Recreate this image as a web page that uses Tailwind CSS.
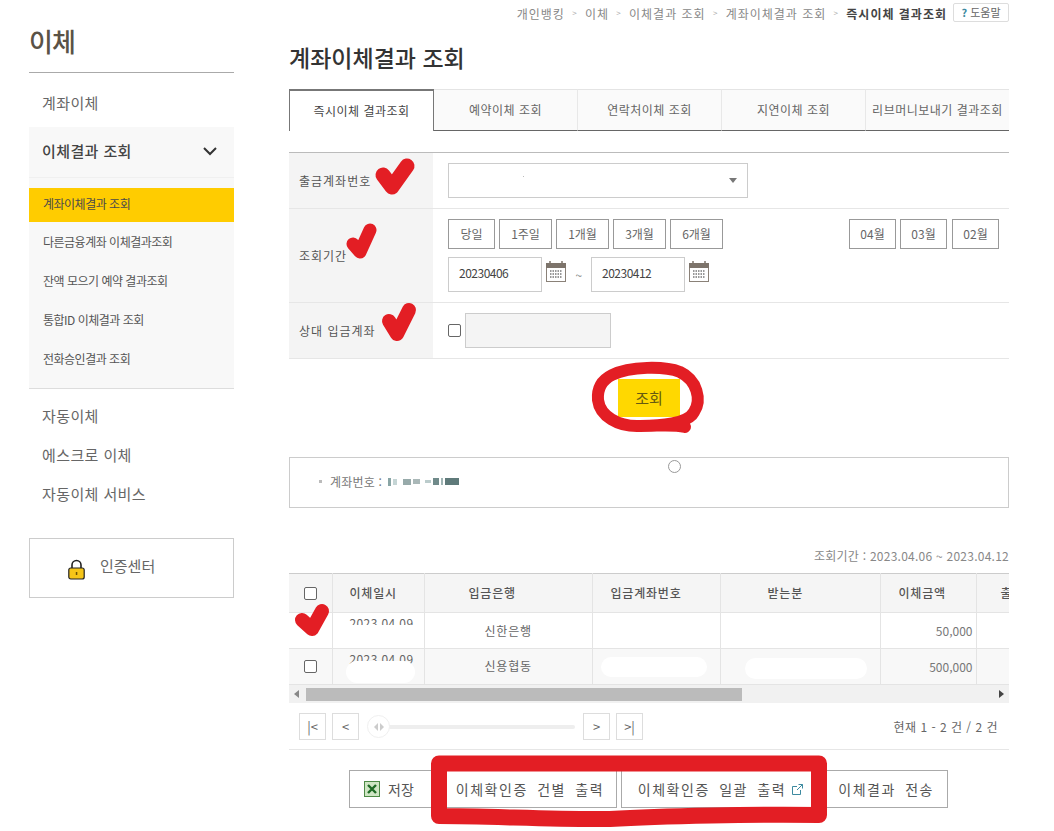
<!DOCTYPE html>
<html lang="ko">
<head>
  <meta charset="UTF-8" />
  <title>계좌이체결과 조회</title>
  <script src="https://cdn.jsdelivr.net/npm/@tailwindcss/browser@4"></script>
</head>
<body class="bg-white">
<div class="relative w-[1054px] h-[831px] overflow-hidden flex font-['Noto_Sans_CJK_KR','Noto_Sans',sans-serif] text-[12px] text-[#555]">

  <!-- Sidebar -->
  <aside class="ml-[29px] w-[205px] shrink-0">
    <div class="h-[73px] border-b border-[#aaa] pt-[22px] text-[26px] leading-[38px] font-medium text-[#5a5246] tracking-[-1px]">이체</div>
    <a class="flex items-center h-[54px] pl-[13px] pt-[6px] text-[15px] tracking-[0.4px] text-[#666]">계좌이체</a>
    <div class="bg-[#f8f8f8] h-[262px] border-b border-[#ddd]">
      <div class="h-[51px] flex items-center justify-between pl-[13px] pr-[17px] pb-[2px] border-b border-[#f0f0f0] text-[15px] font-medium tracking-[0.4px] text-[#444]">
        이체결과 조회
        <svg width="14" height="9" viewBox="0 0 14 9" fill="none" stroke="#333" stroke-width="2"><path d="M1 1l6 6 6-6"/></svg>
      </div>
      <a class="mt-[10px] flex items-center h-[34px] pl-[14px] pb-[2px] bg-[#ffcc00] tracking-[-0.5px] text-[#4a4a4a]">계좌이체결과 조회</a>
      <a class="flex items-center h-[39px] pl-[14px] tracking-[-0.5px] text-[#555]">다른금융계좌 이체결과조회</a>
      <a class="flex items-center h-[39px] pl-[14px] tracking-[-0.5px] text-[#555]">잔액 모으기 예약 결과조회</a>
      <a class="flex items-center h-[39px] pl-[14px] tracking-[-0.5px] text-[#555]">통합ID 이체결과 조회</a>
      <a class="flex items-center h-[39px] pl-[14px] tracking-[-0.5px] text-[#555]">전화승인결과 조회</a>
    </div>
    <div class="pt-[8px] text-[15px] text-[#666] tracking-[0.4px]">
      <a class="flex items-center h-[39px] pl-[13px]">자동이체</a>
      <a class="flex items-center h-[39px] pl-[13px]">에스크로 이체</a>
      <a class="flex items-center h-[39px] pl-[13px]">자동이체 서비스</a>
    </div>
    <div class="mt-[24px] h-[60px] border border-[#ccc] flex items-center pl-[38px] gap-[15px] text-[15px] text-[#666]">
      <svg class="mt-[3px]" width="17" height="21" viewBox="0 0 17 21"><path d="M4 10V6a4.500 4.500 0 0 1 9 0v4" fill="none" stroke="#222" stroke-width="1.600"/><rect x="0.800" y="9" width="15.400" height="11" rx="2" fill="#f5c518" stroke="#222" stroke-width="1.200"/><rect x="7.800" y="13" width="1.500" height="3" fill="#6b5200"/></svg>
      <span class="pb-[3px]">인증센터</span>
    </div>
  </aside>

  <!-- Main -->
  <main class="ml-[55px] w-[720px] shrink-0">
    <div class="h-[26px] flex justify-end items-start pt-[3px] tracking-[1px] text-[#888] text-[12px]">
      <span class="leading-[22px]">개인뱅킹</span><span class="w-[20px] text-center text-[8px] leading-[20px] text-[#aaa]">&gt;</span>
      <span class="leading-[22px]">이체</span><span class="w-[20px] text-center text-[8px] leading-[20px] text-[#aaa]">&gt;</span>
      <span class="leading-[22px]">이체결과 조회</span><span class="w-[20px] text-center text-[8px] leading-[20px] text-[#aaa]">&gt;</span>
      <span class="leading-[22px]">계좌이체결과 조회</span><span class="w-[20px] text-center text-[8px] leading-[20px] text-[#aaa]">&gt;</span>
      <span class="leading-[22px] font-bold text-[#444]">즉시이체 결과조회</span>
      <span class="ml-[6px] w-[56px] h-[19px] border border-[#ddd] rounded-[2px] flex items-center justify-center gap-[3px] text-[11px] tracking-normal text-[#666]"><b class="text-[#3d8aa0]">?</b>도움말</span>
    </div>
    <h1 class="h-[63px] flex items-center text-[23px] font-medium text-[#333]">계좌이체결과 조회</h1>

    <!-- Tabs -->
    <div class="grid grid-cols-[145px_144px_144px_144px_143px] h-[42px] tracking-[0.5px] text-[#666]">
      <div class="flex items-center justify-center border-t-2 border-x border-x-[#777] border-t-[#777] bg-white text-[#444]">즉시이체 결과조회</div>
      <div class="flex items-center justify-center border-t border-r border-t-[#e4e4e4] border-r-[#e8e8e8] border-b border-b-[#666] bg-[#fafafa]">예약이체 조회</div>
      <div class="flex items-center justify-center border-t border-r border-t-[#e4e4e4] border-r-[#e8e8e8] border-b border-b-[#666] bg-[#fafafa]">연락처이체 조회</div>
      <div class="flex items-center justify-center border-t border-r border-t-[#e4e4e4] border-r-[#e8e8e8] border-b border-b-[#666] bg-[#fafafa]">지연이체 조회</div>
      <div class="flex items-center justify-center border-t border-t-[#e4e4e4] border-b border-b-[#666] bg-[#fafafa] whitespace-nowrap">리브머니보내기 결과조회</div>
    </div>

    <!-- Search form -->
    <div class="mt-[21px] border-t border-[#bbb] tracking-[1px]">
      <div class="flex h-[56px] border-b border-[#e6e6e6]">
        <div class="w-[144px] bg-[#f4f4f4] flex items-center pl-[10px]">출금계좌번호</div>
        <div class="pl-[15px] pt-[10px]">
          <div class="relative w-[300px] h-[35px] border border-[#ccc]">
            <span class="absolute left-[74px] top-[12px] w-[1px] h-[1px] bg-[#bbb]"></span>
            <span class="absolute right-[10px] top-[14px] w-0 h-0 border-x-[4px] border-x-transparent border-t-[5px] border-t-[#777]"></span>
          </div>
        </div>
      </div>
      <div class="flex h-[94px] border-b border-[#e6e6e6]">
        <div class="w-[144px] bg-[#f4f4f4] flex items-center pl-[10px]">조회기간</div>
        <div class="flex-1 pl-[15px] pr-[10px] pt-[10px]">
          <div class="flex h-[30px] text-[#666] tracking-normal">
            <span class="w-[47px] border border-[#999] flex items-center justify-center">당일</span>
            <span class="ml-[4px] w-[53px] border border-[#999] flex items-center justify-center">1주일</span>
            <span class="ml-[4px] w-[53px] border border-[#999] flex items-center justify-center">1개월</span>
            <span class="ml-[4px] w-[53px] border border-[#999] flex items-center justify-center">3개월</span>
            <span class="ml-[4px] w-[53px] border border-[#999] flex items-center justify-center">6개월</span>
            <span class="ml-auto w-[47px] border border-[#999] flex items-center justify-center">04월</span>
            <span class="ml-[4px] w-[47px] border border-[#999] flex items-center justify-center">03월</span>
            <span class="ml-[5px] w-[47px] border border-[#999] flex items-center justify-center">02월</span>
          </div>
          <div class="flex items-center mt-[8px] h-[35px] tracking-[-0.5px] text-[#444]">
            <span class="w-[94px] h-[35px] border border-[#ccc] flex items-center pl-[10px] pb-[3px]">20230406</span>
            <svg class="ml-[4px] -mt-[7px]" width="20" height="21" viewBox="0 0 20 21"><rect x="0.500" y="2.500" width="19" height="18" fill="#fff" stroke="#8a8178"/><rect y="2" width="20" height="5" fill="#7d746b"/><path d="M4 0v3M16 0v3" stroke="#7d746b" stroke-width="1.500"/><path d="M4 10h12M4 13h12M4 16h12" stroke="#777" stroke-width="1.500" stroke-dasharray="1.500 1"/></svg>
            <span class="w-[25px] text-center text-[#888]">~</span>
            <span class="w-[94px] h-[35px] border border-[#ccc] flex items-center pl-[10px] pb-[3px]">20230412</span>
            <svg class="ml-[4px] -mt-[7px]" width="20" height="21" viewBox="0 0 20 21"><rect x="0.500" y="2.500" width="19" height="18" fill="#fff" stroke="#8a8178"/><rect y="2" width="20" height="5" fill="#7d746b"/><path d="M4 0v3M16 0v3" stroke="#7d746b" stroke-width="1.500"/><path d="M4 10h12M4 13h12M4 16h12" stroke="#777" stroke-width="1.500" stroke-dasharray="1.500 1"/></svg>
          </div>
        </div>
      </div>
      <div class="flex h-[56px] border-b border-[#e6e6e6]">
        <div class="w-[144px] bg-[#f4f4f4] flex items-center pl-[10px]">상대 입금계좌</div>
        <div class="pl-[15px] pt-[10px] flex items-center self-start">
          <span class="w-[13px] h-[13px] border border-[#666] rounded-[2px] bg-white"></span>
          <span class="ml-[4px] w-[146px] h-[35px] border border-[#ccc] bg-[#f4f4f4]"></span>
        </div>
      </div>
    </div>

    <div class="mt-[20px] flex justify-center">
      <button class="w-[62px] h-[38px] bg-[#ffd800] text-[15px] text-[#665a10]">조회</button>
    </div>

    <div class="mt-[40px] h-[51px] border border-[#ccc] flex items-center pl-[29px] pb-[2px] tracking-[0.2px] text-[#777]">
      <span class="w-[3px] h-[3px] mr-[8px] bg-[#bbb]"></span>계좌번호 :
      <span class="ml-[6px] flex items-center gap-[2px] h-[8px] blur-[0.6px]">
        <i class="w-[3px] h-[8px] bg-[#89a5a5]"></i><i class="w-[4px] h-[6px] bg-[#c5d5d5]"></i>
        <i class="ml-[4px] w-[8px] h-[6px] bg-[#97aaaa]"></i><i class="w-[7px] h-[5px] bg-[#aab8b8]"></i>
        <i class="ml-[3px] w-[6px] h-[3px] bg-[#bcc]"></i><i class="w-[6px] h-[7px] bg-[#708a8a]"></i>
        <i class="w-[2px] h-[7px] bg-[#a0b5b5]"></i><i class="w-[14px] h-[7px] bg-[#5f7a7a]"></i>
      </span>
    </div>

    <div class="h-[65px] flex items-end justify-end pb-[8px] text-[#888] tracking-[0.25px]">조회기간 : 2023.04.06 ~ 2023.04.12</div>

    <!-- Result table -->
    <table class="table-fixed w-[720px] border-t border-[#ccc] text-center">
      <colgroup>
        <col class="w-[43px]" /><col class="w-[92px]" /><col class="w-[168px]" /><col class="w-[128px]" /><col class="w-[160px]" /><col class="w-[96px]" /><col class="w-[33px]" />
      </colgroup>
      <thead>
        <tr class="h-[39px] bg-[#f5f5f5] font-medium text-[#555] tracking-[0.8px]">
          <th class="font-medium border-b border-r border-[#e4e4e4]"><span class="block mx-auto w-[13px] h-[13px] border border-[#666] rounded-[2px] bg-white"></span></th>
          <th class="font-medium border-b border-r border-[#e4e4e4] text-left pl-[17px]">이체일시</th>
          <th class="font-medium border-b border-r border-[#e4e4e4] text-left pl-[44px]">입금은행</th>
          <th class="font-medium border-b border-r border-[#e4e4e4] whitespace-nowrap text-left pl-[18px]">입금계좌번호</th>
          <th class="font-medium border-b border-r border-[#e4e4e4] text-left pl-[47px]">받는분</th>
          <th class="font-medium border-b border-r border-[#e4e4e4] text-left pl-[18px]">이체금액</th>
          <th class="font-medium border-b border-[#e4e4e4] overflow-hidden whitespace-nowrap text-left pl-[24px]">출금계좌번호</th>
        </tr>
      </thead>
      <tbody class="text-[#666] tracking-[0.4px]">
        <tr class="h-[36px]">
          <td class="border-b border-r border-[#e4e4e4]"></td>
          <td class="relative border-b border-r border-[#e4e4e4] overflow-hidden"><span class="absolute left-[17px] top-[1px]">2023.04.09</span><span class="absolute left-[8px] right-[2px] top-[12px] h-[20px] bg-white"></span></td>
          <td class="border-b border-r border-[#e4e4e4] text-left pl-[60px] tracking-[0.8px]">신한은행</td>
          <td class="border-b border-r border-[#e4e4e4]"></td>
          <td class="border-b border-r border-[#e4e4e4]"></td>
          <td class="border-b border-r border-[#e4e4e4] text-right pr-[3px] text-[#777] tracking-normal">50,000</td>
          <td class="border-b border-[#e4e4e4]"></td>
        </tr>
        <tr class="h-[36px] bg-[#f8f8f8]">
          <td class="border-b border-r border-[#e4e4e4]"><span class="block mx-auto w-[13px] h-[13px] border border-[#666] rounded-[2px] bg-white"></span></td>
          <td class="relative border-b border-r border-[#e4e4e4] overflow-hidden"><span class="absolute left-[17px] top-[1px]">2023.04.09</span><span class="absolute left-[13px] top-[12px] w-[69px] h-[22px] rounded-full bg-white"></span></td>
          <td class="border-b border-r border-[#e4e4e4] text-left pl-[60px] pb-[2px] tracking-[0.8px]">신용협동</td>
          <td class="relative border-b border-r border-[#e4e4e4]"><span class="absolute left-[8px] top-[8px] w-[106px] h-[20px] rounded-full bg-white"></span></td>
          <td class="relative border-b border-r border-[#e4e4e4]"><span class="absolute left-[24px] top-[9px] w-[122px] h-[21px] rounded-full bg-white"></span></td>
          <td class="border-b border-r border-[#e4e4e4] text-right pr-[3px] text-[#777] tracking-normal">500,000</td>
          <td class="border-b border-[#e4e4e4]"></td>
        </tr>
      </tbody>
    </table>
    <div class="h-[18px] bg-[#f1f1f1] flex items-center">
      <span class="ml-[5px] w-0 h-0 border-y-[4px] border-y-transparent border-r-[5px] border-r-[#888]"></span>
      <span class="ml-[7px] w-[436px] h-[13px] bg-[#bbb]"></span>
      <span class="ml-auto mr-[5px] w-0 h-0 border-y-[4px] border-y-transparent border-l-[5px] border-l-[#444]"></span>
    </div>

    <!-- Pager -->
    <div class="mt-[10px] h-[27px] flex items-center pl-[10px] pr-[11px] text-[#666]">
      <span class="w-[27px] h-[27px] border border-[#ddd] flex items-center justify-center text-[13px]">|&lt;</span>
      <span class="ml-[6px] w-[27px] h-[27px] border border-[#ddd] flex items-center justify-center text-[13px]">&lt;</span>
      <div class="relative ml-[8px] w-[208px] h-[27px] flex items-center">
        <span class="absolute left-[20px] right-0 h-[4px] rounded-full bg-[#eee]"></span>
        <span class="relative ml-0 w-[23px] h-[23px] rounded-full border border-[#f0f0f0] bg-white flex items-center justify-center gap-[2px]">
          <i class="w-0 h-0 border-y-[4px] border-y-transparent border-r-[4px] border-r-[#ccc]"></i><i class="w-0 h-0 border-y-[4px] border-y-transparent border-l-[4px] border-l-[#ccc]"></i>
        </span>
      </div>
      <span class="ml-[8px] w-[27px] h-[27px] border border-[#ddd] flex items-center justify-center text-[13px]">&gt;</span>
      <span class="ml-[6px] w-[27px] h-[27px] border border-[#ddd] flex items-center justify-center text-[13px]">&gt;|</span>
      <span class="ml-auto tracking-[0.5px] text-[#666] text-[12px]">현재 1 - 2 건 / 2 건</span>
    </div>
    <div class="mt-[9px] border-t border-[#e6e6e6]"></div>

    <!-- Bottom buttons -->
    <div class="mt-[20px] flex ml-[60px] h-[38px] text-[14px] tracking-[1.5px] [word-spacing:4px] text-[#555]">
      <span class="w-[90px] border border-[#aaa] flex items-center pl-[14px] gap-[8px] tracking-normal">
        <svg width="16" height="16" viewBox="0 0 16 16"><rect x="0.500" y="0.500" width="15" height="15" fill="#cfe6c4" stroke="#4d8a45"/><path d="M4 4l8 8M12 4l-8 8" stroke="#1f6b25" stroke-width="2.400"/></svg>
        저장
      </span>
      <span class="ml-[4px] w-[174px] border border-[#aaa] flex items-center justify-center">이체확인증 건별 출력</span>
      <span class="ml-[4px] w-[199px] border border-[#aaa] flex items-center justify-center gap-[6px]">이체확인증 일괄 출력
        <svg width="11" height="11" viewBox="0 0 11 11" fill="none" stroke="#3d8aa0"><path d="M8.500 6v4.500h-8v-8H5M6.500 0.500h4v4M10.500 0.500L5 6"/></svg>
      </span>
      <span class="ml-[4px] w-[124px] border border-[#aaa] flex items-center justify-end pr-[13px]">이체결과 전송</span>
    </div>
  </main>

  <!-- Red pen marks drawn over the page -->
  <svg class="absolute left-0 top-0 pointer-events-none" width="1054" height="831" viewBox="0 0 1054 831" fill="none" stroke="#e31e24" stroke-linecap="round" stroke-linejoin="round">
    <path d="M383 175L392 187L407 166" stroke-width="15"/>
    <path d="M353 244L360 252L370 230" stroke-width="13"/>
    <path d="M389 321L397 334L409 310" stroke-width="14"/>
    <path d="M302 620L312 629L322 611" stroke-width="14"/>
    <path d="M612 375C630 366 665 366 680 372C697 380 702 400 694 412C688 424 660 426 640 426C618 427 600 416 598 400C597 388 602 380 612 375ZM640 426C660 426 672 424 685 427" stroke-width="12"/>
    <path d="M439 763.500H819V815C760 814 660 816 610 819C560 820 490 816 439 816Z" stroke-width="16"/>
  </svg>
  <span class="absolute left-[668px] top-[460px] w-[13px] h-[13px] rounded-full border border-[#999] bg-white"></span>
</div>
</body>
</html>
